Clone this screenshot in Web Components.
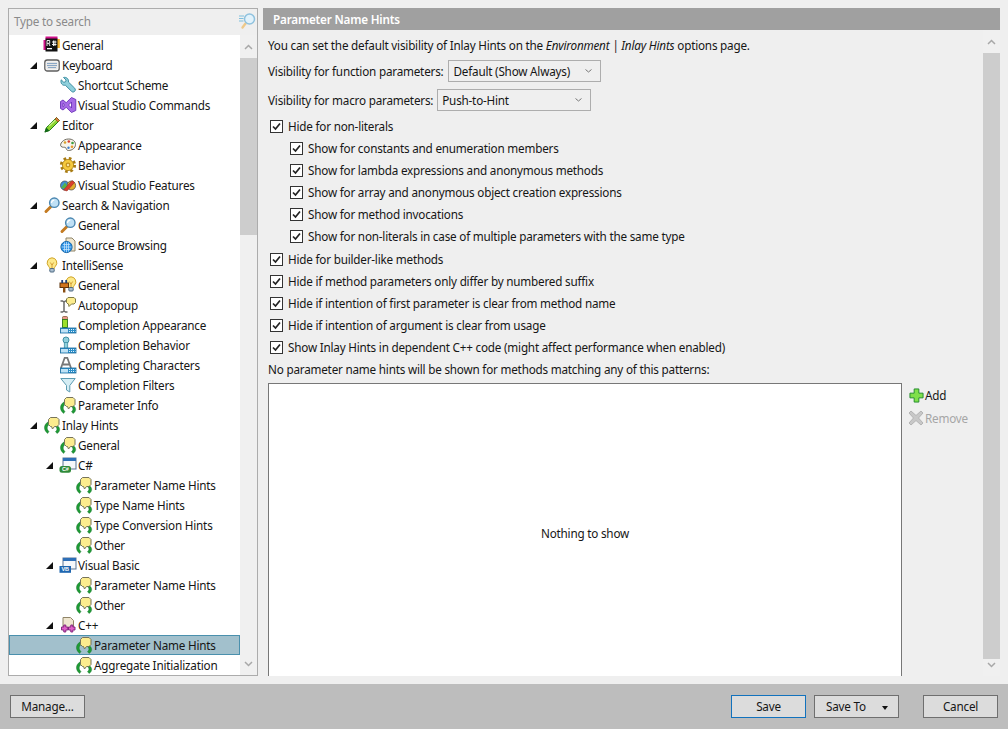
<!DOCTYPE html>
<html>
<head>
<meta charset="utf-8">
<title>Parameter Name Hints</title>
<style>
  html, body { margin: 0; height: 100%; overflow: hidden; }
  body { background: #efefef; color: #161616; font: 11.7px "Noto Sans", "Open Sans", sans-serif; letter-spacing: -0.2px; }
</style>
</head>
<body>
<options-dialog>
  <option-tree slot="tree"></option-tree>
  <hints-page slot="page"></hints-page>
</options-dialog>

<script>
const hint = `<path d="M3.800 5C-.6 8-.6 13 3.600 16.500L5 14.500C2.600 12.500 2.600 9.500 5 7.500z" fill="#1f9a35" stroke="#14702a" stroke-width=".4"/><path d="M13 8.500C16.600 10.500 16.600 14.500 13 16.500L11.500 14.500C13.300 13.300 13.300 11.500 12 10z" fill="#1f9a35" stroke="#14702a" stroke-width=".4"/><path d="M6.500.5h6.500l2 2v5l-2 2h-2.500l-2 2.500-1-2.500h-1l-2-2v-5z" fill="#fcec8e" stroke="#77745a"/>`;
const bulb = `<path d="M8 .8a5 5 0 0 0-3.400 8.500c.7.700 1 1.500 1 2.200h4.800c0-.7.3-1.500 1-2.200A5 5 0 0 0 8 .8z" fill="#fde98a" stroke="#d0a52a"/><path d="M6.300 5.500 8 8l1.700-2.500M8 8v3.300" fill="none" stroke="#c98a1e" stroke-width=".8"/><rect x="5.800" y="11.500" width="4.400" height="3.500" rx="1" fill="#a9bed0" stroke="#4f6a82"/>`;
const kbdBase = `<rect x=".5" y="11" width="15.500" height="5" fill="#2d8fc9" stroke="#1b6a9c" stroke-width=".8"/><rect x="1" y="12" width="7" height="3.500" fill="#bfe2f5"/><path d="M9 12.500h6.500M9 14.500h6.500" stroke="#e3f3fc" stroke-dasharray="1 1"/>`;
const mag = `<path d="M6.500 10 2 14.500" stroke="#c47b22" stroke-width="3" stroke-linecap="round"/><circle cx="10.300" cy="5.700" r="4.700" fill="#bfe0f5" stroke="#4a86b0" stroke-width="1.400"/><path d="M7.500 6a2.800 2.800 0 0 1 2.800-2.800" fill="none" stroke="#fff" stroke-width="1.200"/>`;
const ICONS = {
  rs: `<rect x="1.500" y="-.5" width="12" height="3" fill="#d4148c"/><rect x="13" y="2" width="2.800" height="9" fill="#f5b32e"/><rect x="-.5" y="3" width="2.500" height="10" fill="#d4148c"/><rect x="1.500" y="1.500" width="12" height="13" fill="#111"/><rect x="3" y="11" width="5" height="1.300" fill="#fff"/><path d="M3 9V3.500h2.700v2.800H3M4.700 6.300 6 9M8 5h4.500M8 7.500h4.500M9.500 3.500v5.500M11 3.500v5.500" fill="none" stroke="#fff" stroke-width=".9"/>`,
  keyboard: `<rect x=".8" y="3" width="14.400" height="11" rx="2.500" fill="#f7f7f7" stroke="#5f5f5f" stroke-width="1.300"/><rect x="2.500" y="4.800" width="11" height="7.400" rx="1" fill="#e4e4e4"/><path d="M3.500 6.500h9M3.500 8.500h9M4.500 10.500h7" stroke="#2f6ba8" stroke-dasharray="1 1"/>`,
  wrench: `<path d="M1.200 2.800 3.800 5.300 5.600 4.800l.5-1.800L3.500.5C6.300-.3 9 2 8.400 5l6.300 6.200c1 1.100.7 2.500-.1 3.200-.9.800-2.100.9-3 0L5.300 8.200C2.400 8.900.2 6.200 1.200 2.800z" fill="#8fd0dc" stroke="#3f8fa3"/>`,
  vs: `<path d="M11.500.5 15.800 2.500v11l-4.300 2L6.200 10.300 3 13 .5 11.500v-7L3 3l3.200 2.700zM3 6.300v3.400L4.800 8zM11.500 5 8.500 8l3 3z" fill="#a66ae6" stroke="#6b32b8" stroke-width=".9"/>`,
  pencil: `<path d="M12.500.5 15.500 3.500 5.500 13.500 1 15 2.500 10.500z" fill="#8ad42e" stroke="#25811c"/><path d="M5 9 11.500 3" stroke="#c9f08a" stroke-width="1.300"/><path d="M12.500.5 15.500 3.500 14 5 11 2z" fill="#d9823a" stroke="#8a4c1a" stroke-width=".7"/><path d="M.5 15.500 2.200 10.500 5.500 13.800z" fill="#14681a"/>`,
  palette: `<path d="M8.500 2c4 0 7 2 7 5.500s-3.500 6-7 6c-2.200 0-2-1.800-2.800-2.800S2.300 11 .9 9.200C-.5 7 3 2 8.500 2z" fill="#f8f4ea" stroke="#6e6a60"/><circle cx="5" cy="5.500" r="1.300" fill="#d8a02c"/><circle cx="8.800" cy="4.500" r="1.300" fill="#d8402f"/><circle cx="12.500" cy="6" r="1.300" fill="#3f9f3f"/><circle cx="12" cy="9.800" r="1.300" fill="#e89a2c"/><circle cx="8.500" cy="10.800" r="1.200" fill="#3d7fd0"/>`,
  gear: `<circle cx="8" cy="8" r="6.400" fill="none" stroke="#a87c14" stroke-width="3.400" stroke-dasharray="2.500 2.530"/><circle cx="8" cy="8" r="5.600" fill="#f4c93f" stroke="#a87c14" stroke-width=".8"/><circle cx="8" cy="8" r="2.400" fill="#c4901c"/><circle cx="8" cy="8" r="1.200" fill="#f8e6a0"/>`,
  features: `<ellipse cx="4.800" cy="8.500" rx="4.300" ry="4.500" fill="#3f8fd6" stroke="#444" stroke-width=".7"/><ellipse cx="11.300" cy="8.500" rx="4.300" ry="4.500" fill="#e4b030" stroke="#444" stroke-width=".7"/><path d="M1 11 5 5.500 9 12z" fill="#55b34a"/><path d="M3.500 13 12 3.500l2.500 2L7 14z" fill="#dc3f2e" stroke="#8d2a20" stroke-width=".5"/>`,
  search: mag,
  browse: `<path d="M6 1h6l3 3v10H6z" fill="#efe6cf" stroke="#8f8468"/><circle cx="6.500" cy="10" r="5.600" fill="#2a8fe6" stroke="#1c6aa8"/><path d="M1.500 10h10M6.500 5v10M3 7.500h7M3 12.500h7M4.500 5.500v9M8.500 5.500v9" stroke="#cfe9fb" stroke-width=".7"/>`,
  bulb: bulb,
  plug: `<g transform="translate(3 -1)">${bulb}</g><rect x="0" y="6" width="8.500" height="4.500" fill="#d0741c" stroke="#5e3208"/><path d="M2.200 6V3M6.200 6V3" stroke="#1f3f78" stroke-width="1.800"/><path d="M4.200 10.500V15.500" stroke="#8a4e12" stroke-width="2.400"/>`,
  autopopup: `<path d="M.5 4h2l1.500 1 1.500-1h2M.5 15h2l1.500-1 1.500 1h2M4 5v9" fill="none" stroke="#6a6a6a" stroke-width="1.500"/><path d="M8 .5h6l1.500 1.500v3.500L14 7h-2.500L9 9.500 8.500 7H8L6.500 5.500V2z" fill="#fcec8e" stroke="#7f7a44"/>`,
  capp: `<rect x="2.500" y="-.5" width="5" height="3" rx="1" fill="#e99a8a" stroke="#7a4a2a" stroke-width=".7"/><rect x="2.500" y="2.500" width="5" height="8" fill="#9ce02a" stroke="#2f7a18" stroke-width=".9"/><path d="M3.300 10.500H6.700L5 13z" fill="#14681a"/>${kbdBase}`,
  cbeh: `<circle cx="6" cy="3" r="3" fill="#8fd0dc" stroke="#3f8fa3"/><rect x="4.300" y="5.500" width="3.400" height="6" fill="#8fd0dc" stroke="#3f8fa3" stroke-width=".8"/>${kbdBase}`,
  cchar: `<path d="M1 11 4.700 .8h2.600L11 11M3 7.500h6" fill="none" stroke="#777" stroke-width="1.800"/>${kbdBase}`,
  filter: `<path d="M.8 1.500h14.400L9.800 8.500V15L6.500 13V8.500z" fill="#d5edf4" stroke="#5d9cb2"/>`,
  hint: hint,
  cs: `<rect x="3" y="1" width="13" height="11" fill="#f6f8fb" stroke="#5a7593"/><rect x="3" y="1" width="13" height="3" fill="#2e6fb7"/><rect x="-.5" y="9" width="11.500" height="6.800" rx="2.500" fill="#2f8a3a"/><text x="5.200" y="14.300" font-size="5.500" font-family="Liberation Sans" font-weight="bold" text-anchor="middle" fill="#fff">C#</text>`,
  vb: `<rect x="3" y="1" width="13" height="11" fill="#f6f8fb" stroke="#5a7593"/><rect x="3" y="1" width="13" height="3" fill="#2e6fb7"/><rect x="-.5" y="9" width="11.500" height="6.800" fill="#1f66b0"/><text x="5.200" y="14.300" font-size="5.500" font-family="Liberation Sans" font-weight="bold" text-anchor="middle" fill="#fff">VB</text>`,
  cpp: `<path d="M3 .5h7.500l3 3V11H3z" fill="#efe6cf" stroke="#8f8468"/><path d="M3.800 8v2H1.500v3h2.300v2h2v-2h2v-3h-2V8zM10.800 8v2H8.500v3h2.300v2h2v-2h2.200v-3h-2.200V8z" fill="#e060c8" stroke="#7c1f78" stroke-width=".9"/>`,
  add: `<path d="M5.500 1h5v4.500H15v5h-4.500V15h-5v-4.500H1v-5h4.500z" fill="#7fe04a" stroke="#1f8a2a"/>`,
  remove: `<path d="M3 1 8 5.500 13 1l2 2-4.500 5 4.500 5-2 2-5-4.500L3 15l-2-2 4.500-5L1 3z" fill="#c8c8c8" stroke="#b4b4b4"/>`,
  lens: `<path d="M6.500 10.500 3.500 14.500" stroke="#eec98a" stroke-width="2.400" stroke-linecap="round"/><circle cx="10.500" cy="6" r="5" fill="#e2f2fb" stroke="#8fc2de" stroke-width="1.500"/><path d="M0 3h5M0 5.500h4.500M0 8h4.500" stroke="#7fc0de" stroke-width="1.200"/>`
};

class OptIcon extends HTMLElement {
  connectedCallback() {
    const root = this.attachShadow({ mode: 'open' });
    const size = this.getAttribute('size') || 16;
    root.innerHTML = `<style>:host { display: inline-block; width: ${size}px; height: ${size}px; flex: none; } svg { display: block; overflow: visible; }</style>
      <svg width="${size}" height="${size}" viewBox="0 0 16 16">${ICONS[this.getAttribute('name')] || ''}</svg>`;
  }
}
customElements.define('opt-icon', OptIcon);

// one line of the left tree
class TreeRow extends HTMLElement {
  connectedCallback() {
    const depth = +this.getAttribute('depth') || 0;
    const open = this.hasAttribute('open');
    const root = this.attachShadow({ mode: 'open' });
    root.innerHTML = `<style>
      :host { display: flex; align-items: center; height: 20px; box-sizing: border-box; padding-left: ${20 + 16 * depth}px; white-space: nowrap; }
      :host([selected]) { background: #a2c0cc; outline: 1px solid #4a90ad; outline-offset: -1px; }
      .arrow { width: 15px; flex: none; display: flex; padding-left: 1px; box-sizing: border-box; }
      .arrow i { width: 0; height: 0; border-style: solid; border-width: 0 0 7px 7px; border-color: transparent transparent #111 transparent; }
      opt-icon { margin-right: 2px; }
    </style>
    <span class="arrow">${open ? '<i></i>' : ''}</span><opt-icon name="${this.getAttribute('icon')}"></opt-icon><slot></slot>`;
  }
}
customElements.define('tree-row', TreeRow);

class ScrollBar extends HTMLElement {
  connectedCallback() {
    const root = this.attachShadow({ mode: 'open' });
    root.innerHTML = `<style>
      :host { display: flex; flex-direction: column; width: 17px; flex: none; background: #f0f0f0; }
      .btn { height: 23px; flex: none; display: flex; align-items: center; justify-content: center; }
      .track { flex: 1; display: flex; flex-direction: column; min-height: 0; }
      .thumb { background: #cdcdcd; flex: none; height: var(--thumb, 50%); }
      svg { display: block; }
    </style>
    <div class="btn"><svg width="9" height="6"><path d="M1 5 4.500 1.500 8 5" fill="none" stroke="#a8a8a8" stroke-width="1.500"/></svg></div>
    <div class="track"><div class="thumb"></div></div>
    <div class="btn"><svg width="9" height="6"><path d="M1 1 4.500 4.500 8 1" fill="none" stroke="#a8a8a8" stroke-width="1.500"/></svg></div>`;
  }
}
customElements.define('scroll-bar', ScrollBar);

class OptionTree extends HTMLElement {
  connectedCallback() {
    const rows = [
      [0, 'rs', 'General', 0], [0, 'keyboard', 'Keyboard', 1], [1, 'wrench', 'Shortcut Scheme', 0], [1, 'vs', 'Visual Studio Commands', 0],
      [0, 'pencil', 'Editor', 1], [1, 'palette', 'Appearance', 0], [1, 'gear', 'Behavior', 0], [1, 'features', 'Visual Studio Features', 0],
      [0, 'search', 'Search &amp; Navigation', 1], [1, 'search', 'General', 0], [1, 'browse', 'Source Browsing', 0],
      [0, 'bulb', 'IntelliSense', 1], [1, 'plug', 'General', 0], [1, 'autopopup', 'Autopopup', 0], [1, 'capp', 'Completion Appearance', 0],
      [1, 'cbeh', 'Completion Behavior', 0], [1, 'cchar', 'Completing Characters', 0], [1, 'filter', 'Completion Filters', 0], [1, 'hint', 'Parameter Info', 0],
      [0, 'hint', 'Inlay Hints', 1], [1, 'hint', 'General', 0], [1, 'cs', 'C#', 1], [2, 'hint', 'Parameter Name Hints', 0], [2, 'hint', 'Type Name Hints', 0],
      [2, 'hint', 'Type Conversion Hints', 0], [2, 'hint', 'Other', 0], [1, 'vb', 'Visual Basic', 1], [2, 'hint', 'Parameter Name Hints', 0], [2, 'hint', 'Other', 0],
      [1, 'cpp', 'C++', 1], [2, 'hint', 'Parameter Name Hints', 0, 1], [2, 'hint', 'Aggregate Initialization', 0]
    ];
    const root = this.attachShadow({ mode: 'open' });
    root.innerHTML = `<style>
      :host { display: flex; flex-direction: column; width: 250px; height: 100%; box-sizing: border-box; border: 1px solid #acacac; background: #fff; flex: none; }
      .search { height: 26px; flex: none; background: #efefef; display: flex; align-items: center; justify-content: space-between; padding: 0 2px 2px 5px; box-sizing: border-box; color: #8a8a8a; }
      .body { flex: 1; display: flex; min-height: 0; }
      .rows { flex: 1; min-width: 0; overflow: hidden; }
      scroll-bar { --thumb: 177px; }
    </style>
    <div class="search"><span>Type to search</span><opt-icon name="lens"></opt-icon></div>
    <div class="body"><div class="rows">${rows.map(([d, ic, t, open, sel]) =>
      `<tree-row depth="${d}" icon="${ic}"${open ? ' open' : ''}${sel ? ' selected' : ''}>${t}</tree-row>`).join('')}</div><scroll-bar></scroll-bar></div>`;
  }
}
customElements.define('option-tree', OptionTree);

class OptCheck extends HTMLElement {
  connectedCallback() {
    const root = this.attachShadow({ mode: 'open' });
    root.innerHTML = `<style>
      :host { display: flex; align-items: center; height: 22px; padding-left: 2px; white-space: nowrap; }
      :host([sub]) { padding-left: 22px; }
      .box { width: 13px; height: 13px; box-sizing: border-box; border: 1px solid #333; background: #fff; margin-right: 5px; flex: none; display: block; }
    </style>
    <svg class="box" viewBox="0 0 11 11"><path d="M2 5.500 4.500 8 9 2.500" fill="none" stroke="#222" stroke-width="1.700"/></svg><slot></slot>`;
  }
}
customElements.define('opt-check', OptCheck);

class OptCombo extends HTMLElement {
  connectedCallback() {
    const root = this.attachShadow({ mode: 'open' });
    root.innerHTML = `<style>
      :host { display: inline-flex; align-items: center; justify-content: space-between; box-sizing: border-box; height: 22px; width: ${this.getAttribute('width')}px; border: 1px solid #adadad; padding: 0 8px 0 4px; background: #efefef; }
      svg { display: block; }
    </style>
    <slot></slot><svg width="7" height="4"><path d="M.5.500 3.500 3 6.500.500" fill="none" stroke="#777"/></svg>`;
  }
}
customElements.define('opt-combo', OptCombo);

class DlgButton extends HTMLElement {
  connectedCallback() {
    const root = this.attachShadow({ mode: 'open' });
    const menu = this.hasAttribute('menu');
    root.innerHTML = `<style>
      :host { display: inline-flex; align-items: center; justify-content: ${menu ? 'space-between' : 'center'}; box-sizing: border-box; height: 23px; width: ${this.getAttribute('width')}px; border: 1px solid #6f6f6f; background: #dcdcdc; padding: ${menu ? '0 10px 1px 11px' : '0 0 1px'}; }
      :host([primary]) { border-color: #1272bd; }
      i { width: 0; height: 0; border-style: solid; border-width: 4px 3.500px 0; border-color: #111 transparent transparent; margin-top: 3px; }
    </style><slot></slot>${menu ? '<i></i>' : ''}`;
  }
}
customElements.define('dlg-button', DlgButton);

class HintsPage extends HTMLElement {
  connectedCallback() {
    const root = this.attachShadow({ mode: 'open' });
    root.innerHTML = `<style>
      :host { display: flex; flex-direction: column; flex: 1; min-width: 0; height: 100%; }
      .title { height: 22px; flex: none; background: #a0a0a0; color: #fff; font-weight: 600; padding-left: 10px; display: flex; align-items: center; }
      .wrap { flex: 1; display: flex; min-height: 0; }
      .content { flex: 1; min-width: 0; overflow: hidden; padding: 5px 5px 0; }
      .intro { height: 20px; display: flex; align-items: center; white-space: pre; margin-bottom: 5px; }
      .line { display: flex; align-items: center; gap: 5px; height: 22px; margin-bottom: 7px; white-space: nowrap; }
      .line + .line { margin-bottom: 4px; gap: 4px; }
      .gap { margin-top: 1px; }
      .caption { height: 20px; display: flex; align-items: center; margin-top: 1px; }
      .list { display: flex; gap: 6px; margin-top: 4px; }
      .box { flex: none; width: 634px; height: 300px; box-sizing: border-box; border: 1px solid #777; background: #fff; display: flex; align-items: center; justify-content: center; }
      .side { display: flex; flex-direction: column; gap: 3px; padding-top: 2px; }
      .act { display: flex; align-items: center; gap: 1px; height: 20px; }
      .act opt-icon[name="add"] { margin-left: 1px; }
      .act.off { color: #a6a6a6; }
      scroll-bar { --thumb: 606px; }
    </style>
    <div class="title">Parameter Name Hints</div>
    <div class="wrap">
      <div class="content">
        <div class="intro"><span>You can set the default visibility of Inlay Hints on the <em>Environment | Inlay Hints</em> options page.</span></div>
        <div class="line"><span>Visibility for function parameters:</span><opt-combo width="153">Default (Show Always)</opt-combo></div>
        <div class="line"><span>Visibility for macro parameters:</span><opt-combo width="154">Push-to-Hint</opt-combo></div>
        <opt-check>Hide for non-literals</opt-check>
        <opt-check sub>Show for constants and enumeration members</opt-check>
        <opt-check sub>Show for lambda expressions and anonymous methods</opt-check>
        <opt-check sub>Show for array and anonymous object creation expressions</opt-check>
        <opt-check sub>Show for method invocations</opt-check>
        <opt-check sub>Show for non-literals in case of multiple parameters with the same type</opt-check>
        <opt-check class="gap">Hide for builder-like methods</opt-check>
        <opt-check>Hide if method parameters only differ by numbered suffix</opt-check>
        <opt-check>Hide if intention of first parameter is clear from method name</opt-check>
        <opt-check>Hide if intention of argument is clear from usage</opt-check>
        <opt-check>Show Inlay Hints in dependent C++ code (might affect performance when enabled)</opt-check>
        <div class="caption">No parameter name hints will be shown for methods matching any of this patterns:</div>
        <div class="list">
          <div class="box">Nothing to show</div>
          <div class="side">
            <div class="act"><opt-icon name="add" size="15"></opt-icon>Add</div>
            <div class="act off"><opt-icon name="remove"></opt-icon>Remove</div>
          </div>
        </div>
      </div>
      <scroll-bar></scroll-bar>
    </div>`;
  }
}
customElements.define('hints-page', HintsPage);

class OptionsDialog extends HTMLElement {
  connectedCallback() {
    const root = this.attachShadow({ mode: 'open' });
    root.innerHTML = `<style>
      :host { display: flex; flex-direction: column; height: 729px; width: 1008px; }
      .main { flex: 1; min-height: 0; display: flex; gap: 5px; padding: 8px; }
      .bar { height: 45px; flex: none; background: #bdbdbd; display: flex; align-items: center; padding: 0 10px; }
      .spacer { flex: 1; }
      .save { margin-right: 8px; }
      .to { margin-right: 24px; }
    </style>
    <div class="main"><slot name="tree"></slot><slot name="page"></slot></div>
    <div class="bar">
      <dlg-button width="75">Manage...</dlg-button>
      <span class="spacer"></span>
      <dlg-button width="75" primary class="save">Save</dlg-button>
      <dlg-button width="85" menu class="to">Save To</dlg-button>
      <dlg-button width="75">Cancel</dlg-button>
    </div>`;
  }
}
customElements.define('options-dialog', OptionsDialog);
</script>
</body>
</html>
